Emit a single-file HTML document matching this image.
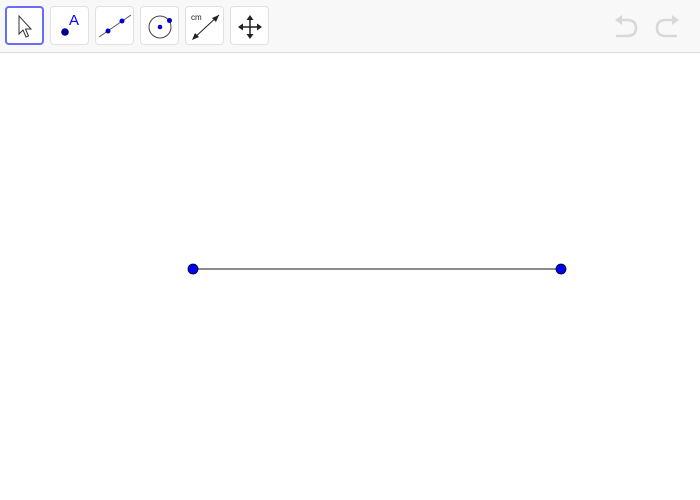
<!DOCTYPE html>
<html><head><style>
html,body{margin:0;padding:0;width:700px;height:500px;background:#fff;overflow:hidden;font-family:"Liberation Sans",sans-serif}
.bar{position:absolute;left:0;top:0;width:700px;height:52px;background:#f8f8f8;border-bottom:1px solid #dcdcdc}
.b{position:absolute;top:6px;width:39px;height:39px;box-sizing:border-box;border:1px solid #e0e0e0;border-radius:4px;background:#fff}
.b.sel{border:2px solid #6b6bf5}
.b svg{position:absolute;left:0;top:0}
</style></head><body>
<div class="bar">
<div class="b sel" style="left:5px"><svg width="38" height="38" viewBox="0 0 38 38"><path d="M12 8 L12 26 L16 22 L19 29 L21.5 28 L18.5 21 L24 21 Z" fill="#fff" stroke="#333" stroke-width="1"/></svg></div>
<div class="b" style="left:50px"><svg width="38" height="38" viewBox="0 0 38 38"><circle cx="14" cy="25" r="3.8" fill="#00008b"/><text x="18" y="18" font-size="15" fill="#0000ff" font-family="Liberation Sans">A</text></svg></div>
<div class="b" style="left:95px"><svg width="38" height="38" viewBox="0 0 38 38"><line x1="3" y1="30" x2="35" y2="8" stroke="#555" stroke-width="1"/><circle cx="12" cy="24" r="2.5" fill="#0000cc"/><circle cx="26" cy="14" r="2.5" fill="#0000cc"/></svg></div>
<div class="b" style="left:140px"><svg width="38" height="38" viewBox="0 0 38 38"><circle cx="19" cy="20" r="11" fill="none" stroke="#444" stroke-width="1"/><circle cx="19" cy="20" r="2.3" fill="#0000cc"/><circle cx="28.5" cy="13.5" r="2.5" fill="#0000cc"/></svg></div>
<div class="b" style="left:185px"><svg width="38" height="38" viewBox="0 0 38 38"><text x="5" y="13" font-size="8" fill="#222" font-family="Liberation Sans">cm</text><line x1="7" y1="32" x2="33" y2="8" stroke="#222" stroke-width="1"/><path d="M33 8 L26 11 L30 15 Z M6 33 L13 30 L9 26 Z" fill="#222"/></svg></div>
<div class="b" style="left:230px"><svg width="38" height="38" viewBox="0 0 38 38"><line x1="19" y1="10" x2="19" y2="30" stroke="#222" stroke-width="1.5"/><line x1="9" y1="20" x2="29" y2="20" stroke="#222" stroke-width="1.5"/><path d="M19 8 L15.5 13 L22.5 13 Z M19 32 L15.5 27 L22.5 27 Z M7 20 L12 16.5 L12 23.5 Z M31 20 L26 16.5 L26 23.5 Z" fill="#222"/></svg></div>
<svg style="position:absolute;left:612px;top:12px" width="70" height="30" viewBox="0 0 70 30"><path d="M8 8 L15 8 Q24 8 24 16 Q24 24 15 24 L4 24" fill="none" stroke="#d8d8d8" stroke-width="2.5"/><path d="M3 8 L10 3 L10 13 Z" fill="#d8d8d8"/><path d="M61 8 L54 8 Q45 8 45 16 Q45 24 54 24 L65 24" fill="none" stroke="#d8d8d8" stroke-width="2.5"/><path d="M67 8 L60 3 L60 13 Z" fill="#d8d8d8"/></svg>
</div>
<svg style="position:absolute;left:0;top:0" width="700" height="500"><line x1="193" y1="269" x2="561" y2="269" stroke="#666" stroke-width="1.5"/><circle cx="193" cy="269" r="5" fill="#0000ff" stroke="#000" stroke-width="0.8"/><circle cx="561" cy="269" r="5" fill="#0000ff" stroke="#000" stroke-width="0.8"/></svg>
</body></html>
